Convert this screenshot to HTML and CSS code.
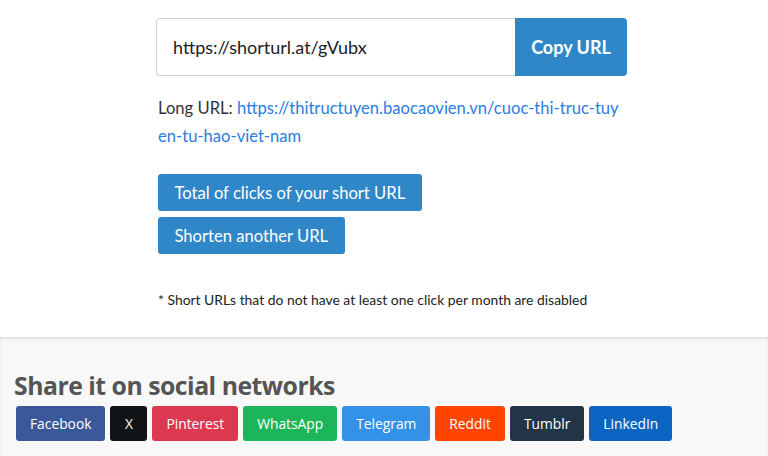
FILE: index.html
```html
<!DOCTYPE html>
<html>
<head>
<meta charset="utf-8">
<link rel="stylesheet" href="styles.css">
</head>
<body>
<main class="main">
  <div class="wrap">
    <div class="copy-row">
      <div class="url-box">https://shorturl.at/gVubx</div>
      <button class="copy-btn">Copy URL</button>
    </div>
    <p class="long">Long URL: <a class="link" href="#">https://thitructuyen.baocaovien.vn/cuoc-thi-truc-tuy<br>en-tu-hao-viet-nam</a></p>
    <div class="actions">
      <button class="btn">Total of clicks of your short URL</button>
      <button class="btn">Shorten another URL</button>
    </div>
    <p class="note">* Short URLs that do not have at least one click per month are disabled</p>
  </div>
</main>
<section class="share">
  <h2 class="share-title">Share it on social networks</h2>
  <div class="socials">
    <a class="soc fb" href="#">Facebook</a>
    <a class="soc x" href="#">X</a>
    <a class="soc pin" href="#">Pinterest</a>
    <a class="soc wa" href="#">WhatsApp</a>
    <a class="soc tg" href="#">Telegram</a>
    <a class="soc rd" href="#">Reddit</a>
    <a class="soc tb" href="#">Tumblr</a>
    <a class="soc li" href="#">LinkedIn</a>
  </div>
</section>
</body>
</html>
```
FILE: styles.css
```css
* { box-sizing: border-box; }
html, body { margin: 0; padding: 0; background: #fff; }
body { font-family: Lato, "Liberation Sans", sans-serif; color: #222; width: 768px; height: 456px; overflow: hidden; }
.main { padding-top: 18px; height: 337px; }
.wrap { margin-left: 156px; width: 471px; }
.copy-row { display: flex; height: 58px; }
.url-box { flex: 1; border: 1px solid #cfd4d8; border-right: none; border-radius: 4px 0 0 4px; padding-left: 16px; display: flex; align-items: center; font-size: 18px; color: #222; }
.copy-btn { width: 112px; border: none; background: #2f87c8; color: #fff; font-family: Lato, sans-serif; font-weight: 700; font-size: 18px; border-radius: 0 4px 4px 0; padding: 0; }
.long { margin: 18px 0 0 2px; font-size: 16.6px; line-height: 28px; color: #333; white-space: nowrap; }
.link { color: #2b7de0; text-decoration: none; }
.actions { margin: 24px 0 0 2px; display: flex; flex-direction: column; align-items: flex-start; gap: 6px; }
.btn { height: 37px; border: none; border-radius: 3px; background: #2f87c8; color: #fff; font-family: Lato, sans-serif; font-size: 16.6px; padding: 0 16.5px; }
.note { margin: 37px 0 0 2px; font-size: 13.9px; color: #222; }
.share { height: 119px; background: #f8f8f8; box-shadow: inset 0 2px 3px #e0e0e0; padding: 30px 0 0 14px; }
.share-title { margin: 0; font-family: "Open Sans", sans-serif; font-weight: 700; font-size: 24.8px; line-height: 36px; color: #555; letter-spacing: -0.5px; }
.socials { display: flex; gap: 5px; margin: 3px 0 0 2px; }
.soc { height: 35px; display: flex; align-items: center; padding: 0 14px; color: #fff; text-decoration: none; font-family: "Open Sans", sans-serif; font-size: 13.8px; border-radius: 3px; }
.x { padding: 0 14.5px; }
.fb { background: #3b5998; }
.x { background: #111417; }
.pin { background: #dc3850; }
.wa { background: #1cb55a; }
.tg { background: #3391e8; }
.rd { background: #ff4500; }
.tb { background: #243447; }
.li { background: #0a66c2; }
```
